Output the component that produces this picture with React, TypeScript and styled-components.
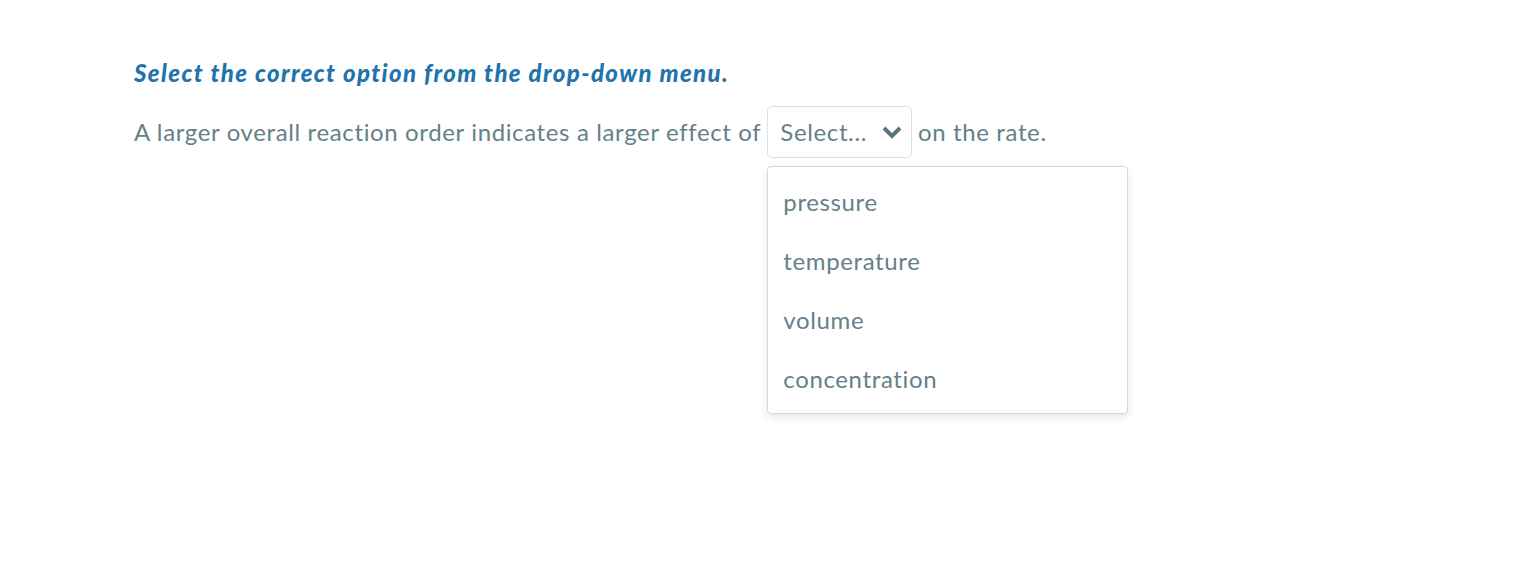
import React from 'react';
import styled, { createGlobalStyle } from 'styled-components';

const GlobalStyle = createGlobalStyle`
  html, body {
    margin: 0;
    padding: 0;
    background: #ffffff;
  }
  body {
    font-family: Lato, 'Open Sans', sans-serif;
  }
`;

const options = ['pressure', 'temperature', 'volume', 'concentration'];

const Page = styled.div`
  padding: 57px 0 0 134px;
  min-height: 570px;
  box-sizing: border-box;
`;

const Instruction = styled.h2`
  margin: 0 0 17px;
  font-size: 24px;
  font-weight: 900;
  font-style: italic;
  letter-spacing: 1.4px;
  color: #1f74ac;
  line-height: 32px;
`;

const Sentence = styled.div`
  display: flex;
  align-items: center;
  font-size: 24px;
  letter-spacing: 0.63px;
  color: #66808a;
  line-height: 32px;
`;

const SelectWrap = styled.span`
  position: relative;
  margin: 0 6px;
`;

const SelectBox = styled.button`
  display: flex;
  align-items: center;
  gap: 15px;
  height: 52px;
  padding: 0 9px 0 12px;
  border: 1px solid #dedede;
  border-radius: 5px;
  background: #fff;
  font: inherit;
  letter-spacing: inherit;
  color: #66808a;
  cursor: pointer;
`;

const Menu = styled.ul`
  position: absolute;
  top: 60px;
  left: 0;
  width: 359px;
  margin: 0;
  padding: 5px 0;
  list-style: none;
  background: #fff;
  border: 1px solid #d6d6d6;
  border-radius: 4px;
  box-shadow: 0 3px 8px rgba(0, 0, 0, 0.1);
`;

const MenuItem = styled.li`
  height: 59px;
  display: flex;
  align-items: center;
  padding: 0 15px;
  font-size: 24px;
  color: #66808a;
`;

const Chevron = () => (
  <svg width="20" height="14" viewBox="0 0 20 14">
    <path d="M2 3 L10 11 L18 3" fill="none" stroke="#5b7580" strokeWidth="4" />
  </svg>
);

const App: React.FC = () => (
  <Page>
    <GlobalStyle />
    <Instruction>Select the correct option from the drop-down menu.</Instruction>
    <Sentence>
      A larger overall reaction order indicates a larger effect of
      <SelectWrap>
        <SelectBox>
          Select...
          <Chevron />
        </SelectBox>
        <Menu>
          {options.map((o) => (
            <MenuItem key={o}>{o}</MenuItem>
          ))}
        </Menu>
      </SelectWrap>
      on the rate.
    </Sentence>
  </Page>
);

export default App;
